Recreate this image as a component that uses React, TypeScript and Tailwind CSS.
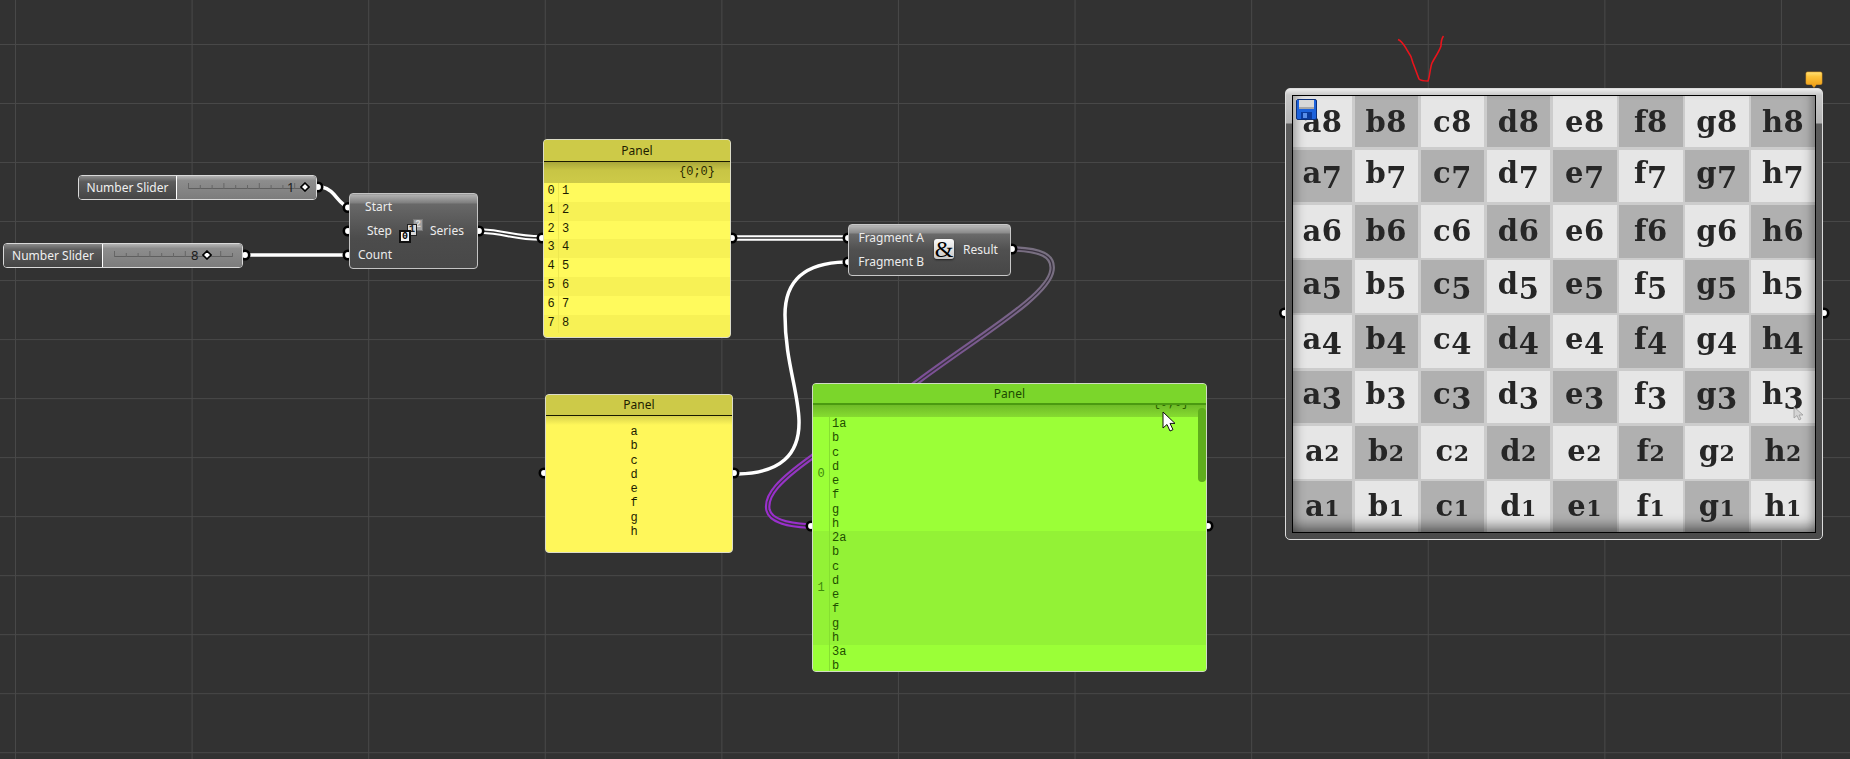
import React from "react";

const sans = "font-['Noto_Sans',sans-serif]";
const mono = "font-['Liberation_Mono',monospace]";

function Grip({ x, y }: { x: number; y: number }) {
  return <circle cx={x} cy={y} r={4.2} fill="#fff" stroke="#000" strokeWidth={2.6} />;
}

function Slider({ left, top, width, split, value, valueX, diamondX }: { left: number; top: number; width: number; split: number; value: string; valueX: number; diamondX: number }) {
  return (
    <div style={{ left, top, width }} className="absolute h-[25px] flex rounded-[4px] border border-[#d9d9d9] overflow-hidden">
      <div style={{ width: split }} className={`h-full flex items-center justify-center bg-[linear-gradient(#8a8a8a_0,#5c5c5c_25%,#454545_100%)] text-[#f0f0f0] text-[12px] ${sans}`}>
        Number Slider
      </div>
      <div className="relative flex-1 border-l border-white bg-[linear-gradient(#b5b5b5_0,#8d8d8d_20%,#7c7c7c_100%)]">
        <svg className="absolute left-[11px] top-[6px]" width="120" height="10" viewBox="0 0 120 10">
          <path d="M0 6.5H119" stroke="#5f5f5f" strokeWidth="1" fill="none" />
          {Array.from({ length: 11 }).map((_, i) => (
            <path key={i} d={`M${0.5 + i * 11.8} ${i % 3 === 0 ? 1 : 3}V7`} stroke="#666" strokeWidth="1" />
          ))}
        </svg>
        <span style={{ left: valueX }} className={`absolute top-[2px] text-[13px] leading-[18px] text-[#1c1c1c] ${sans}`}>{value}</span>
        <svg style={{ left: diamondX }} className="absolute top-[6px]" width="10" height="10" viewBox="0 0 10 10">
          <path d="M5 1L9 5L5 9L1 5Z" fill="#fff" stroke="#000" strokeWidth="1.6" />
        </svg>
      </div>
    </div>
  );
}

function Tile({ n, className }: { n: string; className: string }) {
  return (
    <span className={`absolute flex items-center justify-center font-bold leading-none ${mono} ${className}`}>{n}</span>
  );
}

function ComponentNode() {
  return (
    <div className={`absolute left-[349px] top-[193px] w-[129px] h-[76px] rounded-[4px] border border-[#c4c4c4] overflow-hidden bg-[linear-gradient(#8d8d8d_0,#b0b0b0_1px,#7e7e7e_9px,#686868_10px,#4c4c4c_60%,#484848_100%)] text-[#ececec] text-[12px] ${sans}`}>
      <div className="flex h-full pt-[1px]">
        <div className="w-[42px] flex flex-col items-end">
          <span className="h-[24px] leading-[24px]">Start</span>
          <span className="h-[24px] leading-[24px]">Step</span>
          <span className="h-[24px] leading-[24px]">Count</span>
        </div>
        <div className="relative w-[40px]">
          <Tile n="2" className="left-[21px] top-[24px] w-[10px] h-[12px] text-[10px] bg-[#a0a0a0] text-[#dcdcdc] border border-[#777]" />
          <Tile n="1" className="left-[15px] top-[29px] w-[10px] h-[12px] text-[10px] bg-[#d8d8d8] text-[#222] border border-[#222]" />
          <Tile n="0" className="left-[7px] top-[35px] w-[12px] h-[13px] text-[10px] bg-[#f4f4f4] text-black border-2 border-[#111]" />
        </div>
        <div className="flex items-center ml-[-2px] pb-[2px]">Series</div>
      </div>
    </div>
  );
}

function FragmentNode() {
  return (
    <div className={`absolute left-[848px] top-[224px] w-[163px] h-[52px] rounded-[4px] border border-[#c8c8c8] overflow-hidden bg-[linear-gradient(#a8a8a8_0,#b4b4b4_1px,#8a8a8a_8px,#6a6a6a_9px,#505050_50%,#474747_100%)] text-[#ececec] text-[12px] ${sans}`}>
      <div className="flex h-full items-start">
        <div className="w-[75px] flex flex-col items-end pt-[1px]">
          <span className="h-[24px] leading-[24px]">Fragment A</span>
          <span className="h-[24px] leading-[24px]">Fragment B</span>
        </div>
        <div className="ml-[10px] mt-[14px] w-[20px] h-[20px] flex items-center justify-center rounded-[3px] bg-[linear-gradient(#fafafa,#c8c8c8)] shadow-[0_1px_2px_rgba(0,0,0,0.6)] text-black text-[24px] leading-none font-['Liberation_Serif',serif]">&amp;</div>
        <span className="ml-[9px] mt-[14px] leading-[21px]">Result</span>
      </div>
    </div>
  );
}

function PanelHeader({ bg, line, text, h }: { bg: string; line: string; text: string; h: string }) {
  return (
    <div className={`flex items-center justify-center border-b text-[12px] shrink-0 ${h} ${bg} ${line} ${text} ${sans}`}>Panel</div>
  );
}

function NumberPanel() {
  const rows = ["1", "2", "3", "4", "5", "6", "7", "8"];
  return (
    <div className="absolute left-[543px] top-[139px] w-[188px] h-[199px] rounded-[4px] border border-[#dcdcc8] overflow-hidden bg-[#f7f155] flex flex-col">
      <PanelHeader h="h-[22px]" bg="bg-[#cdca48]" line="border-[#1a1a00]" text="text-[#1e1e00]" />
      <div className={`h-[21px] shrink-0 flex items-center justify-end pr-[15px] bg-[linear-gradient(#a8a63a,#c8c545_40%,#cdca48)] text-[12px] text-[#2a2a00] ${mono}`}>
        <span className="mb-[2px]">{"{0;0}"}</span>
      </div>
      {rows.map((r, i) => (
        <div key={r} className={`h-[18.8px] shrink-0 flex text-[12px] text-[#1c1c00] ${mono} ${i % 2 === 0 ? "bg-[#fffa5c]" : "bg-[#f7f155]"}`}>
          <span className="w-[15px] text-center border-r border-[#eee84f] leading-[16.8px]">{i}</span>
          <span className="pl-[3px] leading-[16.8px]">{r}</span>
        </div>
      ))}
    </div>
  );
}

function LetterPanel() {
  const rows = ["a", "b", "c", "d", "e", "f", "g", "h"];
  return (
    <div className="absolute left-[545px] top-[394px] w-[188px] h-[159px] rounded-[4px] border border-[#dcdcc8] overflow-hidden bg-[#fff75a] flex flex-col">
      <PanelHeader h="h-[21px]" bg="bg-[#cdca48]" line="border-[#1a1a00]" text="text-[#1e1e00]" />
      <div className="h-[9px] shrink-0 bg-[linear-gradient(#d8d24c,#fff75a)]" />
      <div className={`flex flex-col items-center pr-[10px] text-[12px] leading-[14.3px] text-[#1c1c00] ${mono}`}>
        {rows.map((r) => <span key={r}>{r}</span>)}
      </div>
    </div>
  );
}

function GreenPanel() {
  const letters = ["a", "b", "c", "d", "e", "f", "g", "h"];
  return (
    <div className="absolute left-[812px] top-[383px] w-[395px] h-[289px] rounded-[4px] border border-[#d0dcc4] overflow-hidden bg-[#9bff37] flex flex-col">
      <div className={`h-[21px] shrink-0 flex items-center justify-center border-b-2 border-[#4a9a10] bg-[#7bd62b] text-[12px] text-[#1c4a00] ${sans}`}>Panel</div>
      <div className={`h-[12px] shrink-0 flex justify-end overflow-hidden pr-[17px] bg-[linear-gradient(#6fbc28,#86dc30)] text-[12px] leading-[12px] text-[#2a6000] ${mono}`}>
        <span className="mt-[-8px]">{"{0;0}"}</span>
      </div>
      {[0, 1, 2].map((b) => (
        <div key={b} className={`flex shrink-0 ${b === 2 ? "h-[28px]" : "h-[114px]"} ${b === 1 ? "bg-[#93f236]" : "bg-[#9bff37]"}`}>
          <div className={`w-[17px] flex items-center justify-center border-r border-[#86e030] text-[12px] text-[#3f8a0c] ${mono}`}>{b < 2 ? b : ""}</div>
          <div className={`pl-[2px] flex flex-col text-[12px] leading-[14.27px] text-[#1f5000] ${mono}`}>
            {letters.slice(0, b === 2 ? 2 : 8).map((l, i) => (
              <span key={l}>{i === 0 ? `${b + 1}${l}` : l}</span>
            ))}
          </div>
        </div>
      ))}
      <div className="absolute right-[0px] top-[24px] w-[8px] h-[74px] rounded-[4px] bg-[#5fae1c]" />
    </div>
  );
}

function Digit({ d }: { d: string }) {
  if (d === "1" || d === "2") return <span className="text-[22px]">{d}</span>;
  if (d === "6" || d === "8") return <span>{d}</span>;
  return <span className="align-[-5px]">{d}</span>;
}

function Board() {
  const files = ["a", "b", "c", "d", "e", "f", "g", "h"];
  const ranks = ["8", "7", "6", "5", "4", "3", "2", "1"];
  return (
    <div className="absolute left-[1285px] top-[88px] w-[538px] h-[452px] rounded-[5px] border border-[#dcdcdc] p-[6px] bg-[linear-gradient(#ececec,#c8c8c8_6px,#b4b4b4_34px,#5c5c5c_35px,#4a4a4a)]">
      <div className="relative w-full h-full border border-black overflow-hidden bg-[#cccccc] grid grid-cols-[59px_repeat(7,1fr)] grid-rows-[51px_repeat(6,1fr)_51px] gap-[2.5px]">
        {ranks.map((r, ri) =>
          files.map((f, fi) => (
            <div key={f + r} className={`flex items-center justify-center overflow-hidden text-[#262626] blur-[0.6px] ${(ri + fi) % 2 === 0 ? "bg-[#e6e6e6]" : "bg-[#b0b0b0]"}`}>
              <span className="text-[29px] leading-[34px] font-bold tracking-[0.5px] font-['DejaVu_Serif',serif] whitespace-nowrap">
                {f}<Digit d={r} />
              </span>
            </div>
          ))
        )}
        <div className="absolute inset-0 pointer-events-none shadow-[inset_10px_0_10px_-6px_rgba(0,0,0,0.25),inset_-10px_0_10px_-6px_rgba(0,0,0,0.25),inset_0_-12px_12px_-6px_rgba(0,0,0,0.45)]" />
        <svg className="absolute left-[3px] top-[3px]" width="21" height="21" viewBox="0 0 21 21">
          <path d="M1.5 0.5H19a1.5 1.5 0 0 1 1.5 1.5V19a1.5 1.5 0 0 1-1.5 1.5H2A1.5 1.5 0 0 1 0.5 19V1.5Z" fill="#1c62dc" stroke="#0c2f78" />
          <rect x="3" y="1" width="15" height="9" fill="#d8d8d8" />
          <rect x="3" y="8" width="15" height="2" fill="#a8a8a8" />
          <rect x="5" y="13" width="11" height="7" fill="#0b3a9c" />
          <rect x="7" y="14" width="4" height="5" fill="#5a8ee8" />
        </svg>
        <svg className="absolute left-[500px] top-[310px]" width="12" height="15" viewBox="0 0 12 15">
          <path d="M1 1V12L4 9.5L6 14L8 13L6 9H10Z" fill="#cfcfcf" fillOpacity="0.8" stroke="#9a9a9a" strokeWidth="0.8" />
        </svg>
      </div>
    </div>
  );
}

export default function App() {
  return (
    <div className="relative w-full h-[759px] overflow-hidden bg-[#323232] bg-[linear-gradient(#484848_1px,transparent_1px),linear-gradient(90deg,#484848_1px,transparent_1px)] bg-[size:176.6px_59.03px] bg-[position:15px_44px]">
      <svg className="absolute inset-0" width="1850" height="759" viewBox="0 0 1850 759" fill="none">
        <defs>
          <linearGradient id="pur" gradientUnits="userSpaceOnUse" x1="1040" y1="250" x2="790" y2="520">
            <stop offset="0" stopColor="#787080" />
            <stop offset="0.4" stopColor="#7a5492" />
            <stop offset="1" stopColor="#9a2fcc" />
          </linearGradient>
        </defs>
        <path d="M322 187C336 190 338 205 349 207" stroke="#fff" strokeWidth="3.5" />
        <path d="M246 255H349" stroke="#fff" strokeWidth="3.5" />
        <path d="M481 231C505 232 515 238 541 238" stroke="#fff" strokeWidth="5.5" />
        <path d="M481 231C505 232 515 238 541 238" stroke="#323232" strokeWidth="1.4" />
        <path d="M733 238H848" stroke="#fff" strokeWidth="5.5" />
        <path d="M733 238H848" stroke="#323232" strokeWidth="1.4" />
        <path d="M738 474C780 473 800 455 799 420C798 390 785 360 785 315C785 280 805 263 845 262" stroke="#fff" strokeWidth="3.5" />
        <path d="M1014 249C1040 250 1054 255 1052 270C1049 295 985 332 920 380C870 417 840 435 812 457C780 480 765 495 768 510C771 522 790 525 808 526" stroke="url(#pur)" strokeWidth="5.5" />
        <path d="M1014 249C1040 250 1054 255 1052 270C1049 295 985 332 920 380C870 417 840 435 812 457C780 480 765 495 768 510C771 522 790 525 808 526" stroke="#3a3240" strokeWidth="1.3" />
        <Grip x={318} y={187} />
        <Grip x={245} y={255} />
        <Grip x={348} y={207.5} />
        <Grip x={348} y={231} />
        <Grip x={348} y={255} />
        <Grip x={479} y={231} />
        <Grip x={542} y={238} />
        <Grip x={732} y={238} />
        <Grip x={848} y={238} />
        <Grip x={848} y={262} />
        <Grip x={1012} y={249} />
        <Grip x={544} y={473} />
        <Grip x={734} y={473} />
        <Grip x={811} y={526} />
        <Grip x={1208} y={526} />
        <Grip x={1284.5} y={313} />
        <Grip x={1824} y={313} />
      </svg>

      <Slider left={78} top={175} width={239} split={97} value="1" valueX={110} diamondX={123} />
      <Slider left={3} top={243} width={240} split={98} value="8" valueX={88} diamondX={99} />
      <ComponentNode />
      <NumberPanel />
      <FragmentNode />
      <LetterPanel />
      <GreenPanel />
      <Board />

      <svg className="absolute left-[1805px] top-[71px]" width="18" height="18" viewBox="0 0 18 18">
        <defs>
          <linearGradient id="tag" x1="0" y1="0" x2="0" y2="1">
            <stop offset="0" stopColor="#ffe27a" />
            <stop offset="0.3" stopColor="#fdc33a" />
            <stop offset="1" stopColor="#ee9a12" />
          </linearGradient>
        </defs>
        <path d="M2.5 1H15.5A1.5 1.5 0 0 1 17 2.5V12A1.5 1.5 0 0 1 15.5 13.5H11.5L9 16.5L6.5 13.5H2.5A1.5 1.5 0 0 1 1 12V2.5A1.5 1.5 0 0 1 2.5 1Z" fill="url(#tag)" stroke="#e8a020" strokeWidth="0.6" />
      </svg>

      <svg className="absolute left-[1390px] top-[30px]" width="60" height="56" viewBox="1390 30 60 56" fill="none">
        <path d="M1398 39.5C1402 41 1404 45 1407 50C1410 54 1412 58 1413 63C1415 68 1417 74 1419 79C1421 81 1425 81 1428 81C1430 76 1430 68 1432 63C1435 57 1439 52 1441 46C1441 41 1442 38 1443.5 36" stroke="#e8141c" strokeWidth="1.6" />
      </svg>

      <svg className="absolute left-[1162px] top-[411px]" width="15" height="22" viewBox="0 0 15 22">
        <path d="M1 1V17L5 13.5L8 20L11 18.6L8 12.4H13Z" fill="#fff" stroke="#111" strokeWidth="1" />
      </svg>
    </div>
  );
}
